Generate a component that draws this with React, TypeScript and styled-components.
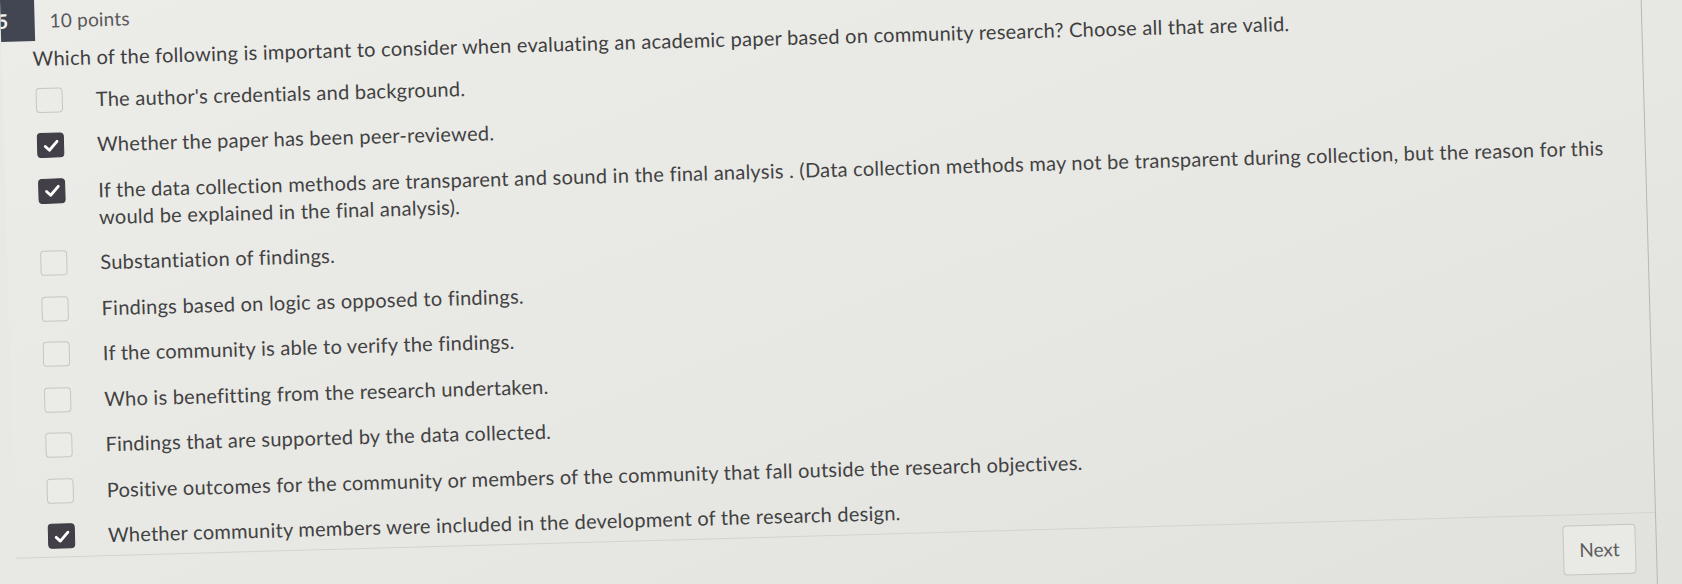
import React, { FC } from "react";
import styled, { createGlobalStyle } from "styled-components";

const PAGE_BG = "#e8e8e5";
const BOX_SIZE = 27;

const GlobalStyle = createGlobalStyle`
  html, body {
    margin: 0;
    padding: 0;
    overflow: hidden;
    background: ${PAGE_BG};
  }
  body {
    font-family: Lato, "Open Sans", sans-serif;
    color: #414141;
  }
`;

/* The photo was taken at a slight tilt, so the whole sheet is turned a little */
const Sheet = styled.div`
  width: 1720px;
  height: 660px;
  transform: rotate(-1.6deg);
  transform-origin: 0 0;
  background: linear-gradient(160deg, #ecece9 0%, #e7e7e4 55%, #e0e0dd 100%);
`;

const Panel = styled.section`
  width: 1640px;
  min-height: 660px;
  border-right: 1px solid #b7b7b5;
  display: flex;
  flex-direction: column;
`;

const Header = styled.header`
  display: flex;
  align-items: center;
  height: 42px;
`;

/* only the right part of the number badge is in view */
const Badge = styled.div`
  flex: none;
  width: 34px;
  height: 42px;
  background: #424653;
  color: #f4f4f4;
  font-size: 20px;
  font-weight: 700;
  display: flex;
  align-items: center;
  justify-content: flex-start;
  overflow: hidden;

  span {
    margin-left: -4px;
  }
`;

const Points = styled.span`
  margin-left: 15px;
  font-size: 19px;
  letter-spacing: 0.2px;
  color: #585858;
`;

const Question = styled.p`
  margin: 3.5px 0 0;
  padding-left: 31px;
  font-size: 20px;
  letter-spacing: 0.25px;
  line-height: 27px;
  color: #3f3f3f;
  white-space: nowrap;
`;

const OptionList = styled.ul`
  list-style: none;
  margin: 15px 0 0;
  padding: 0 0 0 33px;
  display: flex;
  flex-direction: column;
  gap: 18.5px;
`;

const OptionRow = styled.li`
  display: flex;
  align-items: flex-start;
  gap: 33px;
`;

const Box = styled.span<{ $checked: boolean }>`
  flex: none;
  width: ${BOX_SIZE}px;
  height: ${BOX_SIZE - 2}px;
  margin-top: 1px;
  box-sizing: border-box;
  border-radius: 4px;
  border: 1.5px solid ${(p) => (p.$checked ? "#3b3940" : "#c6c6c3")};
  background: ${(p) => (p.$checked ? "#433f49" : "#ebebe8")};
  display: flex;
  align-items: center;
  justify-content: center;

  svg {
    width: 18px;
    height: 18px;
  }
`;

const OptionText = styled.span`
  max-width: 1520px;
  font-size: 20px;
  letter-spacing: 0.25px;
  line-height: 27px;
  color: #424242;
`;

const Footer = styled.footer`
  margin-top: 6.5px;
  border-top: 1px solid #d3d3d0;
  display: flex;
  justify-content: flex-end;
  padding: 10px 20px 0 0;
`;

const NextButton = styled.button`
  width: 73px;
  height: 50px;
  border: 1px solid #c5c5c2;
  border-radius: 4px;
  background: #e9e9e6;
  font-family: Lato, sans-serif;
  font-size: 19px;
  color: #5c5c5c;
`;

const Tick: FC = () => (
  <svg viewBox="0 0 17 17" fill="none">
    <path
      d="M3 9.2 L6.8 12.8 L14.2 4.6"
      stroke="#ffffff"
      strokeWidth="2.7"
      strokeLinecap="round"
      strokeLinejoin="round"
    />
  </svg>
);

const OPTIONS: { text: string; checked: boolean }[] = [
  { text: "The author's credentials and background.", checked: false },
  { text: "Whether the paper has been peer-reviewed.", checked: true },
  {
    text: "If the data collection methods are transparent and sound in the final analysis . (Data collection methods may not be transparent during collection, but the reason for this would be explained in the final analysis).",
    checked: true,
  },
  { text: "Substantiation of findings.", checked: false },
  { text: "Findings based on logic as opposed to findings.", checked: false },
  { text: "If the community is able to verify the findings.", checked: false },
  { text: "Who is benefitting from the research undertaken.", checked: false },
  { text: "Findings that are supported by the data collected.", checked: false },
  {
    text: "Positive outcomes for the community or members of the community that fall outside the research objectives.",
    checked: false,
  },
  {
    text: "Whether community members were included in the development of the research design.",
    checked: true,
  },
];

const App: FC = () => {
  return (
    <>
      <GlobalStyle />
      <Sheet>
        <Panel>
          <Header>
            <Badge>
              <span>5</span>
            </Badge>
            <Points>10 points</Points>
          </Header>
          <Question>
            Which of the following is important to consider when evaluating an academic paper based on
            community research? Choose all that are valid.
          </Question>
          <OptionList>
            {OPTIONS.map((o) => (
              <OptionRow key={o.text}>
                <Box $checked={o.checked}>{o.checked && <Tick />}</Box>
                <OptionText>{o.text}</OptionText>
              </OptionRow>
            ))}
          </OptionList>
          <Footer>
            <NextButton>Next</NextButton>
          </Footer>
        </Panel>
      </Sheet>
    </>
  );
};

export default App;
